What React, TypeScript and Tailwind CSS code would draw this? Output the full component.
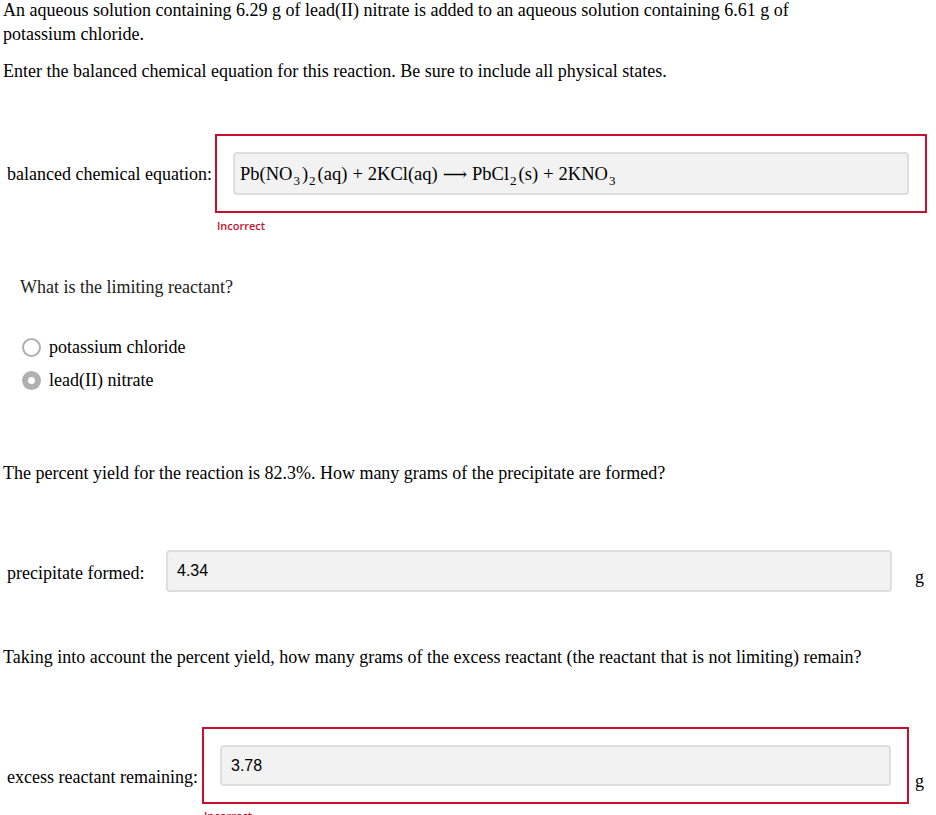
import React from 'react';

const serif = "font-['Liberation_Serif','Times_New_Roman',serif]";

function Sub({ children }: { children: React.ReactNode }) {
    return <span className="relative top-[5px] text-[13px] leading-none ml-[1px] mr-[2px]">{children}</span>;
}

function Radio({ checked, label }: { checked?: boolean; label: string }) {
    return (
        <div className="flex items-center h-6 ml-[19px]">
            {checked ? (
                <span className="w-[19px] h-[19px] rounded-full bg-[#b0b0b0] flex items-center justify-center">
                    <span className="w-[7px] h-[7px] rounded-full bg-white" />
                </span>
            ) : (
                <span className="w-[19px] h-[19px] rounded-full border-2 border-[#b0b0b0] bg-white" />
            )}
            <span className="ml-[8px]">{label}</span>
        </div>
    );
}

function Incorrect({ className = '' }: { className?: string }) {
    return (
        <div className={`font-['Open_Sans',sans-serif] text-[11px] leading-4 font-semibold text-[#c8102e] ${className}`}>
            Incorrect
        </div>
    );
}

export default function App() {
    return (
        <div className={`w-[936px] h-[815px] overflow-hidden bg-white text-black text-[18px] leading-6 pl-[3px] ${serif}`}>
            <p className="max-w-[800px] mt-[-2px]">
                An aqueous solution containing 6.29 g of lead(II) nitrate is added to an aqueous solution containing 6.61 g of potassium chloride.
            </p>
            <p className="mt-[13px]">
                Enter the balanced chemical equation for this reaction. Be sure to include all physical states.
            </p>

            {/* equation row */}
            <div className="flex items-center mt-[51px]">
                <div className="ml-[4px] w-[208px]">balanced chemical equation:</div>
                <div className="w-[712px] border-2 border-[#c8102e] p-[16px]">
                    <div className="h-[43px] border-2 border-[#dedede] rounded-[4px] bg-[#f2f2f2] flex items-center pl-[5px] text-[18.5px] whitespace-nowrap">
                        <span>
                            Pb(NO<Sub>3</Sub>)<Sub>2</Sub>(aq)<span className="mx-[5px]">+</span>2KCl(aq)
                            <span className="mx-[5px] font-['DejaVu_Serif',serif] text-[17px]">⟶</span>
                            PbCl<Sub>2</Sub>(s)<span className="mx-[5px]">+</span>2KNO<Sub>3</Sub>
                        </span>
                    </div>
                </div>
            </div>
            <Incorrect className="ml-[214px] mt-[5px]" />

            <div className="ml-[17px] mt-[41px] text-[#222]">What is the limiting reactant?</div>

            <div className="mt-[36px] flex flex-col gap-[9px]">
                <Radio label="potassium chloride" />
                <Radio checked label="lead(II) nitrate" />
            </div>

            <p className="mt-[69px]">
                The percent yield for the reaction is 82.3%. How many grams of the precipitate are formed?
            </p>

            {/* precipitate row */}
            <div className="flex items-center mt-[65px]">
                <div className="ml-[4px] w-[159px] mt-[4px]">precipitate formed:</div>
                <div className="w-[726px] h-[42px] border-2 border-[#dedede] rounded-[4px] bg-[#f2f2f2] flex items-center pl-[9px] text-[16px] font-['Liberation_Sans',Arial,sans-serif]">
                    4.34
                </div>
                <div className="ml-[23px] mt-[12px]">g</div>
            </div>

            <p className="mt-[53px]">
                Taking into account the percent yield, how many grams of the excess reactant (the reactant that is not limiting) remain?
            </p>

            {/* excess row */}
            <div className="flex items-center mt-[58px]">
                <div className="ml-[4px] w-[195px] mt-[22px] whitespace-nowrap">excess reactant remaining:</div>
                <div className="w-[707px] border-2 border-[#c8102e] p-[16px]">
                    <div className="h-[41px] border-2 border-[#dedede] rounded-[4px] bg-[#f2f2f2] flex items-center pl-[9px] text-[16px] font-['Liberation_Sans',Arial,sans-serif]">
                        3.78
                    </div>
                </div>
                <div className="ml-[6px] mt-[30px]">g</div>
            </div>
            <Incorrect className="ml-[201px] mt-[4px]" />
        </div>
    );
}
